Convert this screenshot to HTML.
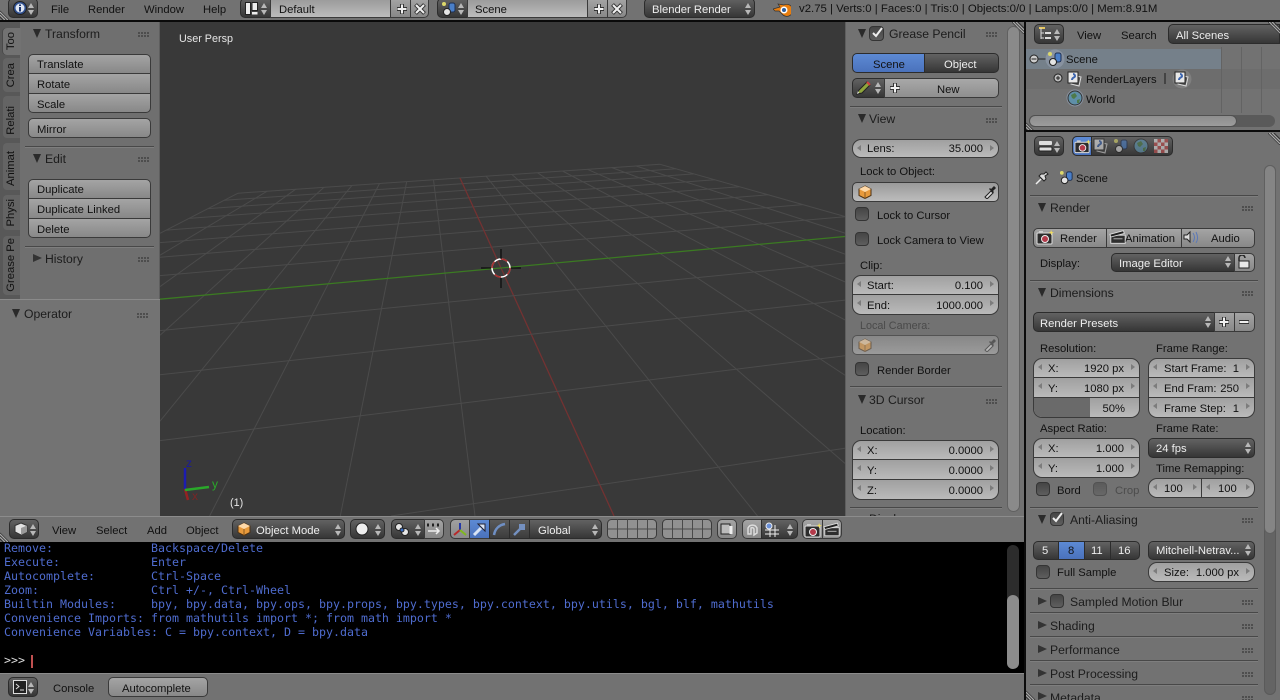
<!DOCTYPE html>
<html><head><meta charset="utf-8"><title>Blender</title>
<style>
html,body{margin:0;padding:0;background:#000;width:1280px;height:700px;overflow:hidden}
#r{position:relative;width:1280px;height:700px;overflow:hidden;font:11.25px/14px "Liberation Sans",sans-serif;color:#111;background:#000}
#r div,#r span,#r i,#r svg{position:absolute;box-sizing:border-box}
.p{background:#727272}
.t{white-space:nowrap;line-height:18px}
.w{color:#eee}
.t.tt{font-size:12.2px;color:#1c1c1c;line-height:14px}
.b,.f,.n,.d{border:1px solid #3a3a3a;white-space:nowrap;line-height:17px}
.b{background:linear-gradient(#a4a4a4,#888);border-radius:5px;color:#111}
.f{background:linear-gradient(#9a9a9a,#bcbcbc);border-radius:5px}
.n{background:linear-gradient(#a0a0a0,#bababa);border-radius:9px}
.d{background:linear-gradient(#626262,#363636);border-radius:5px;color:#eee;border-color:#2c2c2c}
.n::before,.n::after{content:"";position:absolute;top:5px;border:3.5px solid transparent}
.n::before{left:4px;border-right:4px solid #7c7c7c;border-left:0}
.n::after{right:4px;border-left:4px solid #7c7c7c;border-right:0}
.nn::before,.nn::after{display:none}
.l{left:14px}.v{right:15px}
.ud{width:7px;height:12px}
.ud::before,.ud::after{content:"";position:absolute;left:0;border-left:3.5px solid transparent;border-right:3.5px solid transparent}
.ud::before{top:0;border-bottom:5px solid #b8b8b8}
.ud::after{bottom:0;border-top:5px solid #b8b8b8}
.to{border-left:4.5px solid transparent;border-right:4.5px solid transparent;border-top:9px solid #2a2a2a;width:0;height:0}
.tc{border-top:4.5px solid transparent;border-bottom:4.5px solid transparent;border-left:9px solid #333;width:0;height:0}
.g{width:11px;height:6px;background:radial-gradient(circle at 1px 1px,#3c3c3c .7px,transparent 1.1px) 0 0/3px 3px}
.h{height:1px;background:#484848;box-shadow:0 1px 0 #7e7e7e}
.c{width:14px;height:14px;border:1px solid #343434;border-radius:4px;background:linear-gradient(#454545,#5e5e5e)}
.m{font:11.63px/14px "DejaVu Sans Mono",monospace;color:#4f6ccf;white-space:pre;left:4px}
.tab{background:#646464;border-radius:4px 0 0 4px;width:17px;left:3px}
.tab span{writing-mode:vertical-rl;transform:rotate(180deg);white-space:nowrap;left:2px;bottom:3px;line-height:13px}
</style></head><body>
<svg width="0" height="0" style="position:absolute">
<defs>
<symbol id="cube" viewBox="0 0 14 14"><path d="M7 1 13 4v6.500L7 13.500 1 10.500V4Z" fill="#e89a3c" stroke="#4a3015"/><path d="M1 4 7 7 13 4 7 1Z" fill="#ffd9a8"/><path d="M7 7v6.500" stroke="#8a5a20"/></symbol>
<symbol id="scn" viewBox="0 0 16 16"><circle cx="3" cy="3" r="2" fill="#dcd86a"/><rect x="8" y="2" width="6" height="9" rx="2" fill="#4a7fc8" stroke="#1d2f52"/><circle cx="6" cy="11" r="3.500" fill="#e4e4e4" stroke="#222"/></symbol>
<symbol id="cam" viewBox="0 0 18 16"><rect x="1" y="4" width="15" height="11" rx="1" fill="#2c2c2c" stroke="#ddd"/><circle cx="9" cy="10" r="3.500" fill="#b33a4a" stroke="#eee"/><path d="M3 2h4v2H3z" fill="#ccc"/><path d="M15 1l1 2 2 .5-2 .8-.7 2-.8-2-2-.8 2-.5Z" fill="#f0dc60"/></symbol>
<symbol id="clap" viewBox="0 0 20 16"><rect x="2" y="6" width="16" height="9" fill="#2e2e2e" stroke="#ddd"/><path d="M1 5 16 1l1 3L2 8Z" fill="#222" stroke="#ddd"/><path d="M5 10h10" stroke="#bbb"/></symbol>
<symbol id="rl" viewBox="0 0 16 16"><path d="M5 4l9 2-2 9-8-2Z" fill="#555" stroke="#ddd"/><rect x="1" y="1" width="10" height="11" fill="#e8e8e8" stroke="#222"/><path d="M6 3a2 2 0 0 1 2 2c0 2-3 1-3 4" stroke="#3d66b0" stroke-width="2" fill="none"/></symbol>
<symbol id="world" viewBox="0 0 16 16"><circle cx="8" cy="8" r="7" fill="#5f8fa8" stroke="#333"/><path d="M4 5l4-2 2 3-3 3-2-1ZM10 10l3-1-1 4-2 0Z" fill="#4e7a4a"/></symbol>
<symbol id="plus" viewBox="0 0 14 14"><path d="M7 2v10M2 7h10" stroke="#333" stroke-width="4"/><path d="M7 2.500v9M2.500 7h9" stroke="#f0f0f0" stroke-width="2"/></symbol>
<symbol id="x" viewBox="0 0 14 14"><path d="M2.500 2.500l9 9M11.500 2.500l-9 9" stroke="#333" stroke-width="4"/><path d="M3 3l8 8M11 3l-8 8" stroke="#f0f0f0" stroke-width="2"/></symbol>
<symbol id="drop" viewBox="0 0 14 14"><path d="M2 12 8 6l2 2-6 6Z" fill="#ddd" stroke="#222"/><path d="M8 4l3-3 2 2-3 3 1 1-1 1-4-4 1-1Z" fill="#222"/></symbol>
<symbol id="chk" viewBox="0 0 14 14"><path d="M3 7l3 3 6-8" stroke="#eee" stroke-width="2" fill="none"/></symbol>
</defs></svg>
<div id="r">

<!-- top bar -->
<div class="p" style="left:0;top:0;width:1280px;height:20px"></div>
<svg style="left:0;top:8px" width="12" height="12"><path d="M0 3l9 9M0 6l6 6M0 9l3 3" stroke="#333"/><path d="M0 4l8 8M0 7l5 5" stroke="#aaa"/></svg>
<div class="d" style="left:8px;top:-2px;width:30px;height:20px"></div>
<svg style="left:13px;top:1px" width="14" height="14"><circle cx="7" cy="7" r="6.500" fill="#2f4f8f" stroke="#222"/><circle cx="7" cy="7" r="4.500" fill="#dfe6f2"/><path d="M7 3.500v1.500M7 6v4.500" stroke="#1d3670" stroke-width="2"/></svg>
<i class="ud" style="left:28px;top:3px"></i>
<div class="t" style="left:51px;top:1px">File</div>
<div class="t" style="left:88px;top:1px">Render</div>
<div class="t" style="left:144px;top:1px">Window</div>
<div class="t" style="left:203px;top:1px">Help</div>
<div class="d" style="left:240px;top:-2px;width:32px;height:20px;border-radius:5px 0 0 5px"></div>
<svg style="left:245px;top:2px" width="13" height="13"><rect x=".5" y=".5" width="5" height="12" fill="#eee" stroke="#222"/><rect x="7" y=".5" width="5.500" height="8" fill="#eee" stroke="#222"/><rect x="7" y="10" width="5.500" height="2.500" fill="#eee"/></svg>
<i class="ud" style="left:261px;top:3px"></i>
<div class="f" style="left:270px;top:-2px;width:121px;height:20px;border-radius:0"><span class="t" style="left:8px;top:2px">Default</span></div>
<div class="b" style="left:390px;top:-2px;width:21px;height:20px;border-radius:0"></div>
<svg style="left:395px;top:2px" width="14" height="14"><use href="#plus"/></svg>
<div class="b" style="left:410px;top:-2px;width:19px;height:20px;border-radius:0 0 5px 0"></div>
<svg style="left:413px;top:2px" width="14" height="14"><use href="#x"/></svg>
<div class="d" style="left:437px;top:-2px;width:31px;height:20px;border-radius:5px 0 0 5px"></div>
<svg style="left:441px;top:1px" width="16" height="16"><use href="#scn"/></svg>
<i class="ud" style="left:458px;top:3px"></i>
<div class="f" style="left:467px;top:-2px;width:121px;height:20px;border-radius:0"><span class="t" style="left:7px;top:2px">Scene</span></div>
<div class="b" style="left:587px;top:-2px;width:21px;height:20px;border-radius:0"></div>
<svg style="left:592px;top:2px" width="14" height="14"><use href="#plus"/></svg>
<div class="b" style="left:607px;top:-2px;width:20px;height:20px;border-radius:0 0 5px 0"></div>
<svg style="left:610px;top:2px" width="14" height="14"><use href="#x"/></svg>
<div class="d" style="left:644px;top:-2px;width:111px;height:20px"><span class="t w" style="left:7px;top:2px">Blender Render</span></div>
<i class="ud" style="left:745px;top:3px"></i>
<svg style="left:773px;top:1px" width="18" height="16"><path d="M0 8 7 6 5 3l6 1a6 6 0 1 1-2 9L6 10 2 10Z" fill="#e87d0d" stroke="#333" stroke-width=".7"/><circle cx="11" cy="9" r="3.500" fill="#fff"/><circle cx="11" cy="9" r="2" fill="#2f5f9f"/></svg>
<div class="t" style="left:799px;top:0px;font-size:11.4px">v2.75 | Verts:0 | Faces:0 | Tris:0 | Objects:0/0 | Lamps:0/0 | Mem:8.91M</div>
<div style="left:0;top:20px;width:1280px;height:2px;background:#0a0a0a"></div>

<!-- viewport -->
<div style="left:160px;top:22px;width:685px;height:494px;background:#393939"></div>
<svg id="grid" style="left:160px;top:22px" width="685" height="494" viewBox="160 22 685 494"></svg>
<svg style="left:160px;top:22px" width="685" height="494" viewBox="160 22 685 494">
<circle cx="501" cy="268" r="9" fill="none" stroke="#fff" stroke-width="1.500"/>
<circle cx="501" cy="268" r="9" fill="none" stroke="#a82c2c" stroke-width="1.500" stroke-dasharray="7 7"/>
<path d="M501 249v10M501 278v10M481 268h10M511 268h10" stroke="#000" stroke-width="1"/>
<path d="M185 489v-21" stroke="#1c1cb0" stroke-width="2.500"/>
<path d="M185 489 188 500" stroke="#962222" stroke-width="2.500"/>
<path d="M185 490 209 487" stroke="#2aa82a" stroke-width="2.500"/>
</svg>
<div class="t" style="left:186px;top:454px;color:#1a1a9a;font-size:12px">z</div>
<div class="t" style="left:212px;top:475px;color:#2aa82a;font-size:12px">y</div>
<div class="t" style="left:192px;top:487px;color:#7a2626;font-size:12px">x</div>
<div class="t" style="left:179px;top:30px;color:#e6e6e6;font-size:10.8px">User Persp</div>
<div class="t" style="left:230px;top:494px;color:#e6e6e6;font-size:10.8px">(1)</div>

<!-- tool shelf -->
<div style="left:0;top:22px;width:160px;height:278px;background:#6f6f6f"></div>
<div style="left:0;top:22px;width:20px;height:278px;background:#585858"></div>
<div style="left:159px;top:22px;width:1px;height:278px;background:#5e5e5e"></div>
<div class="tab" style="top:28px;height:27px;background:#727272;width:18px;box-shadow:-1px 0 0 #4a4a4a"><span style="bottom:5px">Too</span></div>
<div class="tab" style="top:58px;height:34px"><span style="bottom:5px">Crea</span></div>
<div class="tab" style="top:96px;height:42px"><span>Relati</span></div>
<div class="tab" style="top:143px;height:47px"><span style="bottom:4px">Animat</span></div>
<div class="tab" style="top:195px;height:35px"><span>Physi</span></div>
<div class="tab" style="top:236px;height:59px"><span>Grease Pe</span></div>

<i class="to" style="left:33px;top:29px"></i>
<div class="t tt" style="left:45px;top:27px">Transform</div><i class="g" style="left:138px;top:32px"></i>
<div class="b" style="left:28px;top:54px;width:123px;height:20px;border-radius:5px 5px 0 0"><span class="t" style="left:8px;top:1px">Translate</span></div>
<div class="b" style="left:28px;top:73px;width:123px;height:21px;border-radius:0"><span class="t" style="left:8px;top:2px">Rotate</span></div>
<div class="b" style="left:28px;top:93px;width:123px;height:20px;border-radius:0 0 5px 5px"><span class="t" style="left:8px;top:2px">Scale</span></div>
<div class="b" style="left:28px;top:118px;width:123px;height:20px"><span class="t" style="left:8px;top:2px">Mirror</span></div>
<div class="h" style="left:25px;top:146px;width:129px"></div>
<i class="to" style="left:33px;top:154px"></i>
<div class="t tt" style="left:45px;top:152px">Edit</div><i class="g" style="left:138px;top:157px"></i>
<div class="b" style="left:28px;top:179px;width:123px;height:20px;border-radius:5px 5px 0 0"><span class="t" style="left:8px;top:1px">Duplicate</span></div>
<div class="b" style="left:28px;top:198px;width:123px;height:21px;border-radius:0"><span class="t" style="left:8px;top:2px">Duplicate Linked</span></div>
<div class="b" style="left:28px;top:218px;width:123px;height:20px;border-radius:0 0 5px 5px"><span class="t" style="left:8px;top:2px">Delete</span></div>
<div class="h" style="left:25px;top:246px;width:129px"></div>
<i class="tc" style="left:33px;top:254px"></i>
<div class="t tt" style="left:45px;top:252px">History</div><i class="g" style="left:138px;top:257px"></i>

<!-- operator -->
<div style="left:0;top:299px;width:160px;height:217px;background:#737373;border-top:1px solid #8a8a8a"></div>
<i class="to" style="left:12px;top:309px"></i>
<div class="t tt" style="left:24px;top:307px">Operator</div><i class="g" style="left:137px;top:313px"></i>

<!-- N panel -->
<div style="left:845px;top:22px;width:180px;height:494px;background:#727272;border-left:1px solid #5e5e5e"></div>
<svg style="left:1012px;top:22px" width="13" height="12"><path d="M0 0l12 12M3 0l9 9M6 0l6 6" stroke="#333"/><path d="M1 0l11 11M4 0l8 8" stroke="#aaa"/></svg>
<div style="left:1007px;top:26px;width:13px;height:486px;border-radius:7px;background:#8a8a8a;border:1px solid #606060"></div>

<i class="to" style="left:858px;top:29px"></i>
<div class="c" style="left:869px;top:26px;width:15px;height:15px"></div><svg style="left:870px;top:26px" width="14" height="14"><use href="#chk"/></svg>
<div class="t tt" style="left:889px;top:27px">Grease Pencil</div><i class="g" style="left:986px;top:32px"></i>
<div class="d" style="left:852px;top:53px;width:73px;height:20px;background:linear-gradient(#5d8ad4,#4a72bc);border-radius:5px 0 0 5px;color:#111"><span class="t" style="left:20px;top:2px">Scene</span></div>
<div class="d" style="left:924px;top:53px;width:75px;height:20px;border-radius:0 5px 5px 0"><span class="t" style="left:19px;top:2px">Object</span></div>
<div class="d" style="left:852px;top:78px;width:33px;height:20px;border-radius:5px 0 0 5px"></div>
<svg style="left:856px;top:81px" width="15" height="14"><path d="M1 13 3 9 11 1l3 3-8 8Z" fill="#8fa53c" stroke="#222"/><path d="M11 1l3 3" stroke="#d04040" stroke-width="2"/><path d="M1 13l2-1-1-2Z" fill="#eee"/></svg>
<i class="ud" style="left:875px;top:82px"></i>
<div class="f" style="left:884px;top:78px;width:115px;height:20px;border-radius:0 5px 5px 0;background:linear-gradient(#a8a8a8,#8f8f8f)"><span class="t" style="left:52px;top:2px">New</span></div>
<svg style="left:888px;top:81px" width="14" height="14"><use href="#plus"/></svg>
<div class="h" style="left:850px;top:106px;width:152px"></div>

<i class="to" style="left:858px;top:114px"></i>
<div class="t tt" style="left:869px;top:112px">View</div><i class="g" style="left:986px;top:118px"></i>
<div class="n" style="left:852px;top:139px;width:147px;height:19px"><span class="t l" style="top:0">Lens:</span><span class="t v" style="top:0">35.000</span></div>
<div class="t" style="left:860px;top:163px">Lock to Object:</div>
<div class="f" style="left:852px;top:182px;width:147px;height:20px"></div>
<svg style="left:858px;top:185px" width="14" height="14"><use href="#cube"/></svg>
<svg style="left:983px;top:185px" width="14" height="14"><use href="#drop"/></svg>
<div class="c" style="left:855px;top:207px"></div><div class="t" style="left:877px;top:207px">Lock to Cursor</div>
<div class="c" style="left:855px;top:232px"></div><div class="t" style="left:877px;top:232px">Lock Camera to View</div>
<div class="t" style="left:860px;top:257px">Clip:</div>
<div class="n" style="left:852px;top:275px;width:147px;height:20px;border-radius:9px 9px 0 0"><span class="t l" style="top:1px">Start:</span><span class="t v" style="top:1px">0.100</span></div>
<div class="n" style="left:852px;top:295px;width:147px;height:20px;border-radius:0 0 9px 9px;border-top:0"><span class="t l" style="top:2px">End:</span><span class="t v" style="top:2px">1000.000</span></div>
<div class="t" style="left:860px;top:317px;color:#4a4a4a;font-size:10.8px">Local Camera:</div>
<div class="f" style="left:852px;top:335px;width:147px;height:20px;opacity:.55"></div>
<svg style="left:858px;top:338px;opacity:.55" width="14" height="14"><use href="#cube"/></svg>
<svg style="left:983px;top:338px;opacity:.5" width="14" height="14"><use href="#drop"/></svg>
<div class="c" style="left:855px;top:362px"></div><div class="t" style="left:877px;top:362px">Render Border</div>
<div class="h" style="left:850px;top:386px;width:152px"></div>
<i class="to" style="left:858px;top:395px"></i>
<div class="t tt" style="left:869px;top:393px">3D Cursor</div><i class="g" style="left:986px;top:399px"></i>
<div class="t" style="left:860px;top:422px">Location:</div>
<div class="n" style="left:852px;top:440px;width:147px;height:20px;border-radius:9px 9px 0 0"><span class="t l" style="top:1px">X:</span><span class="t v" style="top:1px">0.0000</span></div>
<div class="n" style="left:852px;top:460px;width:147px;height:20px;border-radius:0;border-top:0"><span class="t l" style="top:2px">Y:</span><span class="t v" style="top:2px">0.0000</span></div>
<div class="n" style="left:852px;top:480px;width:147px;height:20px;border-radius:0 0 9px 9px;border-top:0"><span class="t l" style="top:2px">Z:</span><span class="t v" style="top:2px">0.0000</span></div>
<div class="h" style="left:850px;top:507px;width:152px"></div>
<div class="t tt" style="left:869px;top:512px">Display</div>

<!-- 3D view header -->
<div style="left:0;top:516px;width:1025px;height:26px;background:#727272;border-top:1px solid #8c8c8c"></div>
<svg style="left:0;top:530px" width="12" height="12"><path d="M0 3l9 9M0 6l6 6M0 9l3 3" stroke="#333"/><path d="M0 4l8 8M0 7l5 5" stroke="#aaa"/></svg>
<div class="d" style="left:9px;top:519px;width:30px;height:20px"></div>
<svg style="left:14px;top:522px" width="14" height="14"><path d="M7 1 13 3.500V10L7 13 1 10V3.500Z" fill="#e2e2e2" stroke="#333"/><path d="M7 6v7L13 10V3.500Z" fill="#999"/></svg>
<i class="ud" style="left:30px;top:524px"></i>
<div class="t" style="left:52px;top:522px">View</div>
<div class="t" style="left:96px;top:522px">Select</div>
<div class="t" style="left:147px;top:522px">Add</div>
<div class="t" style="left:186px;top:522px">Object</div>
<div class="d" style="left:232px;top:519px;width:113px;height:20px"><span class="t" style="left:23px;top:2px">Object Mode</span></div>
<svg style="left:237px;top:522px" width="14" height="14"><use href="#cube"/></svg>
<i class="ud" style="left:335px;top:524px"></i>
<div class="d" style="left:350px;top:519px;width:35px;height:20px"></div>
<svg style="left:355px;top:522px" width="14" height="14"><circle cx="7" cy="7" r="6" fill="#eee" stroke="#222"/></svg>
<i class="ud" style="left:375px;top:524px"></i>
<div class="d" style="left:391px;top:519px;width:34px;height:20px;border-radius:5px 0 0 5px"></div>
<svg style="left:394px;top:522px" width="16" height="15"><circle cx="5" cy="5" r="3.500" fill="#e6e6e6" stroke="#222"/><circle cx="11" cy="10" r="3.500" fill="#e6e6e6" stroke="#222"/><circle cx="8" cy="8" r="2" fill="#3a6cc0" stroke="#222"/></svg>
<i class="ud" style="left:415px;top:524px"></i>
<div class="b" style="left:424px;top:519px;width:20px;height:20px;border-radius:0 5px 5px 0"></div>
<svg style="left:426px;top:522px" width="16" height="14"><path d="M1 3l2 0M6 3h2M11 3h2" stroke="#222" stroke-width="3"/><path d="M2 9h11M10 6l3 3-3 3" stroke="#eee" stroke-width="1.500" fill="none"/></svg>
<div class="d" style="left:450px;top:519px;width:81px;height:20px;border-radius:5px 0 0 5px;background:linear-gradient(#5a5a5a,#3c3c3c)"></div>
<div class="b" style="left:450px;top:519px;width:20px;height:20px;border-radius:5px 0 0 5px;background:linear-gradient(#a0a0a0,#8a8a8a)"></div>
<svg style="left:452px;top:522px" width="16" height="15"><path d="M8 1v7" stroke="#2438a8" stroke-width="2"/><path d="M8 8 2 13" stroke="#b82a2a" stroke-width="2"/><path d="M8 8l6 5" stroke="#7fb81e" stroke-width="2"/></svg>
<div class="b" style="left:469px;top:519px;width:21px;height:20px;border-radius:0;background:linear-gradient(#5d8ad4,#4a72bc)"></div>
<svg style="left:472px;top:522px" width="15" height="15"><path d="M2 13 9 6" stroke="#d8e4f6" stroke-width="3"/><path d="M6 2h7v7Z" fill="#d8e4f6" stroke="#223"/></svg>
<svg style="left:492px;top:522px" width="15" height="15"><path d="M2 13C3 7 7 3 13 2" stroke="#6f8fc4" stroke-width="2.500" fill="none"/></svg>
<svg style="left:512px;top:522px" width="15" height="15"><path d="M2 13 8 7" stroke="#7490c0" stroke-width="2.500"/><rect x="7" y="2" width="6" height="6" fill="#7490c0"/></svg>
<div style="left:489px;top:519px;width:1px;height:20px;background:#2c2c2c"></div>
<div style="left:509px;top:519px;width:1px;height:20px;background:#2c2c2c"></div>
<div class="d" style="left:529px;top:519px;width:73px;height:20px;border-radius:0 5px 5px 0"><span class="t" style="left:8px;top:2px">Global</span></div>
<i class="ud" style="left:592px;top:524px"></i>
<svg style="left:607px;top:519px" width="50" height="20"><rect x=".5" y=".5" width="49" height="19" rx="4" fill="#919191" stroke="#3a3a3a"/><path d="M.5 10h49M10.500 .5v19M20.500 .5v19M30.500 .5v19M40.500 .5v19" stroke="#4a4a4a"/></svg>
<svg style="left:662px;top:519px" width="50" height="20"><rect x=".5" y=".5" width="49" height="19" rx="4" fill="#919191" stroke="#3a3a3a"/><path d="M.5 10h49M10.500 .5v19M20.500 .5v19M30.500 .5v19M40.500 .5v19" stroke="#4a4a4a"/></svg>
<div class="b" style="left:717px;top:519px;width:20px;height:20px"></div>
<svg style="left:720px;top:522px" width="15" height="15"><rect x="1" y="2" width="9" height="10" fill="#bbb" stroke="#222"/><path d="M11 4v8" stroke="#eee" stroke-width="3"/></svg>
<div class="b" style="left:742px;top:519px;width:20px;height:20px;border-radius:5px 0 0 5px"></div>
<svg style="left:745px;top:522px" width="15" height="15"><path d="M3 6a5 5 0 0 1 9 0L12 11 9 13 9 7a2 2 0 0 0-3-1L6 12 3 12Z" fill="none" stroke="#dcdcdc" stroke-width="1.500"/></svg>
<div class="d" style="left:761px;top:519px;width:37px;height:20px;border-radius:0 5px 5px 0"></div>
<svg style="left:764px;top:522px" width="16" height="15"><path d="M1 8h14M1 12h14M6 3v12M11 3v12" stroke="#eee"/><circle cx="5" cy="4" r="3" fill="#6a90d8" stroke="#eee"/></svg>
<i class="ud" style="left:787px;top:524px"></i>
<div class="b" style="left:802px;top:519px;width:21px;height:20px;border-radius:5px 0 0 5px"></div>
<svg style="left:804px;top:522px" width="18" height="16"><use href="#cam"/></svg>
<div class="b" style="left:822px;top:519px;width:20px;height:20px;border-radius:0 5px 5px 0"></div>
<svg style="left:823px;top:522px" width="18" height="15"><use href="#clap"/></svg>

<!-- console -->
<div style="left:0;top:542px;width:1025px;height:131px;background:#000"></div>
<div class="m" style="top:541px">Remove:              Backspace/Delete</div>
<div class="m" style="top:555px">Execute:             Enter</div>
<div class="m" style="top:569px">Autocomplete:        Ctrl-Space</div>
<div class="m" style="top:583px">Zoom:                Ctrl +/-, Ctrl-Wheel</div>
<div class="m" style="top:597px">Builtin Modules:     bpy, bpy.data, bpy.ops, bpy.props, bpy.types, bpy.context, bpy.utils, bgl, blf, mathutils</div>
<div class="m" style="top:611px">Convenience Imports: from mathutils import *; from math import *</div>
<div class="m" style="top:625px">Convenience Variables: C = bpy.context, D = bpy.data</div>
<div class="m" style="top:653px;color:#ddd">&gt;&gt;&gt;</div>
<div style="left:31px;top:655px;width:2px;height:13px;background:#c05050"></div>
<div style="left:1007px;top:545px;width:12px;height:124px;border-radius:6px;background:#2c2c2c"></div>
<div style="left:1007px;top:595px;width:12px;height:74px;border-radius:6px;background:#8c8c8c"></div>

<!-- console header -->
<div style="left:0;top:673px;width:1025px;height:27px;background:#727272;border-top:1px solid #8c8c8c"></div>
<div class="d" style="left:8px;top:677px;width:30px;height:20px"></div>
<svg style="left:13px;top:680px" width="14" height="14"><rect x=".5" y=".5" width="13" height="13" fill="#222" stroke="#ddd"/><path d="M3 4l3 2.500L3 9M7 10h4" stroke="#ddd" fill="none"/></svg>
<i class="ud" style="left:28px;top:682px"></i>
<div class="t" style="left:53px;top:680px">Console</div>
<div class="b" style="left:108px;top:677px;width:100px;height:20px"><span class="t" style="left:13px;top:2px">Autocomplete</span></div>

<!-- vertical split -->
<div style="left:1024px;top:22px;width:2px;height:678px;background:#0c0c0c"></div>

<!-- outliner -->
<div style="left:1026px;top:22px;width:254px;height:108px;background:#727272"></div>
<div style="left:1026px;top:69px;width:254px;height:20px;background:#6d6d6d"></div>
<div style="left:1026px;top:49px;width:195px;height:20px;background:#75808a"></div>
<div style="left:1221px;top:47px;width:1px;height:66px;background:#636363"></div>
<div style="left:1241px;top:47px;width:1px;height:66px;background:#636363"></div>
<div style="left:1261px;top:47px;width:1px;height:66px;background:#636363"></div>
<div class="d" style="left:1034px;top:24px;width:30px;height:20px"></div>
<svg style="left:1038px;top:27px" width="15" height="14"><path d="M1 1h6" stroke="#e8c860" stroke-width="2"/><path d="M3 1v11M3 6h3M3 11h3" stroke="#ddd"/><path d="M7 6h6M7 11h6" stroke="#ddd" stroke-width="2"/></svg>
<i class="ud" style="left:1054px;top:29px"></i>
<div class="t" style="left:1077px;top:27px">View</div>
<div class="t" style="left:1121px;top:27px">Search</div>
<div class="d" style="left:1168px;top:24px;width:112px;height:20px;border-radius:5px 0 0 5px"><span class="t" style="left:7px;top:2px">All Scenes</span></div>
<svg style="left:1268px;top:22px" width="12" height="12"><path d="M0 0l12 12M3 0l9 9M6 0l6 6" stroke="#333"/><path d="M1 0l11 11M4 0l8 8" stroke="#aaa"/></svg>
<svg style="left:1028px;top:53px" width="26" height="12"><circle cx="6" cy="6" r="4" fill="#ccc" stroke="#222"/><path d="M3.500 6h5M10 6h12" stroke="#222"/></svg>
<svg style="left:1045px;top:49px" width="20" height="20"><circle cx="10" cy="10" r="9.500" fill="#8892a0"/><svg x="2" y="2" width="16" height="16"><use href="#scn"/></svg></svg>
<div class="t" style="left:1066px;top:51px">Scene</div>
<svg style="left:1053px;top:73px" width="10" height="10"><circle cx="5" cy="5" r="4" fill="#bbb" stroke="#222"/><path d="M3 5h4M5 3v4" stroke="#222"/></svg>
<svg style="left:1067px;top:71px" width="16" height="16"><use href="#rl"/></svg>
<div class="t" style="left:1086px;top:71px">RenderLayers</div>
<div style="left:1164px;top:73px;width:2px;height:11px;background:#444"></div>
<svg style="left:1172px;top:69px" width="20" height="20"><circle cx="10" cy="10" r="9.500" fill="#7f7f7f"/><svg x="2" y="2" width="16" height="16"><use href="#rl"/></svg></svg>
<svg style="left:1066px;top:89px" width="18" height="18"><circle cx="9" cy="9" r="8.500" fill="#8892a0"/><svg x="1" y="1" width="16" height="16"><use href="#world"/></svg></svg>
<div class="t" style="left:1086px;top:91px">World</div>
<div style="left:1029px;top:115px;width:246px;height:12px;border-radius:6px;background:#5a5a5a"></div>
<div style="left:1029px;top:115px;width:208px;height:12px;border-radius:6px;background:linear-gradient(#8e8e8e,#9c9c9c);border:1px solid #505050"></div>
<svg style="left:1026px;top:120px" width="12" height="12"><path d="M0 3l9 9M0 6l6 6M0 9l3 3" stroke="#333"/><path d="M0 4l8 8M0 7l5 5" stroke="#aaa"/></svg>
<div style="left:1026px;top:130px;width:254px;height:2px;background:#0c0c0c"></div>

<!-- properties -->
<div style="left:1026px;top:132px;width:254px;height:568px;background:#727272"></div>
<svg style="left:1268px;top:133px" width="12" height="12"><path d="M0 0l12 12M3 0l9 9M6 0l6 6" stroke="#333"/><path d="M1 0l11 11M4 0l8 8" stroke="#aaa"/></svg>
<div class="d" style="left:1034px;top:136px;width:30px;height:20px"></div>
<svg style="left:1038px;top:139px" width="15" height="14"><rect x="1" y="2" width="13" height="4" rx="1" fill="#ddd"/><rect x="1" y="8" width="13" height="4" rx="1" fill="#ddd" stroke="#222"/></svg>
<i class="ud" style="left:1054px;top:141px"></i>
<div class="d" style="left:1072px;top:136px;width:101px;height:20px"></div>
<div class="d" style="left:1072px;top:136px;width:20px;height:20px;background:linear-gradient(#5d8ad4,#4a72bc);border-radius:5px 0 0 5px"></div>
<svg style="left:1074px;top:138px" width="17" height="16"><use href="#cam"/></svg>
<svg style="left:1093px;top:138px;opacity:.6" width="16" height="16"><use href="#rl"/></svg>
<svg style="left:1113px;top:138px;opacity:.6" width="16" height="16"><use href="#scn"/></svg>
<svg style="left:1133px;top:138px;opacity:.7" width="16" height="16"><use href="#world"/></svg>
<svg style="left:1154px;top:139px;opacity:.75" width="14" height="14"><rect width="14" height="14" fill="#b05050"/><path d="M0 0h3.500v3.500H0zM7 0h3.500v3.500H7zM3.500 3.500H7V7H3.500zM10.500 3.500H14V7h-3.500zM0 7h3.500v3.500H0zM7 7h3.500v3.500H7zM3.500 10.500H7V14H3.500zM10.500 10.500H14V14h-3.500z" fill="#ccc"/></svg>
<div style="left:1264px;top:165px;width:12px;height:530px;border-radius:6px;background:#646464;border:1px solid #5a5a5a"></div>
<div style="left:1264px;top:165px;width:12px;height:369px;border-radius:6px;background:#858585;border:1px solid #606060"></div>
<svg style="left:1035px;top:170px" width="16" height="15"><path d="M1 14 6 9" stroke="#eee" stroke-width="1.500"/><path d="M4 6 9 11 11 9 10 6 13 4 11 2 9 4 6 4Z" fill="#ddd" stroke="#222"/></svg>
<svg style="left:1059px;top:170px" width="15" height="15"><use href="#scn"/></svg>
<div class="t" style="left:1076px;top:170px">Scene</div>
<div class="h" style="left:1030px;top:195px;width:228px"></div>

<i class="to" style="left:1038px;top:203px"></i>
<div class="t tt" style="left:1050px;top:201px">Render</div><i class="g" style="left:1242px;top:206px"></i>
<div class="b" style="left:1033px;top:228px;width:74px;height:20px;border-radius:5px 0 0 5px"><span class="t" style="left:26px;top:1px">Render</span></div>
<div class="b" style="left:1106px;top:228px;width:76px;height:20px;border-radius:0"><span class="t" style="left:18px;top:1px">Animation</span></div>
<div class="b" style="left:1181px;top:228px;width:74px;height:20px;border-radius:0 5px 5px 0"><span class="t" style="left:29px;top:1px">Audio</span></div>
<svg style="left:1036px;top:229px" width="18" height="16"><use href="#cam"/></svg>
<svg style="left:1109px;top:229px" width="18" height="16"><use href="#clap"/></svg>
<svg style="left:1183px;top:230px" width="16" height="15"><path d="M1 5h3l3-3v10L4 9H1Z" fill="#ddd" stroke="#222"/><path d="M10 3c2 3 2 6 0 9M13 2c2 4 2 8 0 11" stroke="#5a78b8" fill="none"/></svg>
<div class="t" style="left:1040px;top:255px">Display:</div>
<div class="d" style="left:1111px;top:253px;width:124px;height:19px;border-radius:5px 0 0 5px"><span class="t" style="left:7px;top:1px">Image Editor</span></div>
<i class="ud" style="left:1225px;top:256px"></i>
<div class="b" style="left:1234px;top:253px;width:21px;height:19px;border-radius:0 5px 5px 0"></div>
<svg style="left:1236px;top:255px" width="15" height="15"><path d="M3 6V3a3 3 0 0 1 6 0" stroke="#222" stroke-width="1.500" fill="none"/><rect x="3" y="6" width="10" height="7" fill="#e8e8e8" stroke="#222"/></svg>
<div class="h" style="left:1030px;top:280px;width:228px"></div>

<i class="to" style="left:1038px;top:288px"></i>
<div class="t tt" style="left:1050px;top:286px">Dimensions</div><i class="g" style="left:1242px;top:291px"></i>
<div class="d" style="left:1033px;top:312px;width:182px;height:20px;border-radius:5px 0 0 5px"><span class="t" style="left:6px;top:2px">Render Presets</span></div>
<i class="ud" style="left:1205px;top:316px"></i>
<div class="b" style="left:1214px;top:312px;width:21px;height:20px;border-radius:0"></div>
<svg style="left:1217px;top:315px" width="14" height="14"><use href="#plus"/></svg>
<div class="b" style="left:1234px;top:312px;width:21px;height:20px;border-radius:0 5px 5px 0"></div>
<svg style="left:1237px;top:315px" width="14" height="14"><path d="M2 7h10" stroke="#333" stroke-width="4"/><path d="M2.500 7h9" stroke="#f0f0f0" stroke-width="2"/></svg>

<div class="t" style="left:1040px;top:340px">Resolution:</div>
<div class="t" style="left:1156px;top:340px">Frame Range:</div>
<div class="n" style="left:1033px;top:358px;width:107px;height:20px;border-radius:9px 9px 0 0"><span class="t l" style="top:1px">X:</span><span class="t v" style="top:1px">1920 px</span></div>
<div class="n" style="left:1033px;top:378px;width:107px;height:20px;border-radius:0;border-top:0"><span class="t l" style="top:2px">Y:</span><span class="t v" style="top:2px">1080 px</span></div>
<div class="n nn" style="left:1033px;top:398px;width:107px;height:20px;border-radius:0 0 9px 9px;border-top:0;overflow:hidden"><div style="left:0;top:0;width:56px;height:19px;background:#6a6a6a"></div><span class="t" style="right:14px;top:2px">50%</span></div>
<div class="n" style="left:1148px;top:358px;width:107px;height:20px;border-radius:9px 9px 0 0"><span class="t l" style="left:15px;top:1px">Start Frame:</span><span class="t v" style="right:15px;top:1px">1</span></div>
<div class="n" style="left:1148px;top:378px;width:107px;height:20px;border-radius:0;border-top:0"><span class="t l" style="left:15px;top:2px">End Fram:</span><span class="t v" style="right:15px;top:2px">250</span></div>
<div class="n" style="left:1148px;top:398px;width:107px;height:20px;border-radius:0 0 9px 9px;border-top:0"><span class="t l" style="left:15px;top:2px">Frame Step:</span><span class="t v" style="right:15px;top:2px">1</span></div>

<div class="t" style="left:1040px;top:420px">Aspect Ratio:</div>
<div class="t" style="left:1156px;top:420px">Frame Rate:</div>
<div class="n" style="left:1033px;top:438px;width:107px;height:20px;border-radius:9px 9px 0 0"><span class="t l" style="top:1px">X:</span><span class="t v" style="top:1px">1.000</span></div>
<div class="n" style="left:1033px;top:458px;width:107px;height:20px;border-radius:0 0 9px 9px;border-top:0"><span class="t l" style="top:2px">Y:</span><span class="t v" style="top:2px">1.000</span></div>
<div class="d" style="left:1148px;top:438px;width:107px;height:20px"><span class="t" style="left:7px;top:1px">24 fps</span></div>
<i class="ud" style="left:1245px;top:442px"></i>
<div class="t" style="left:1156px;top:460px">Time Remapping:</div>
<div class="n" style="left:1148px;top:478px;width:54px;height:20px;border-radius:9px 0 0 9px"><span class="t" style="left:15px;top:1px">100</span></div>
<div class="n" style="left:1201px;top:478px;width:54px;height:20px;border-radius:0 9px 9px 0"><span class="t" style="left:16px;top:1px">100</span></div>
<div class="c" style="left:1036px;top:482px"></div><div class="t" style="left:1057px;top:482px">Bord</div>
<div class="c" style="left:1093px;top:482px;opacity:.5"></div><div class="t" style="left:1115px;top:482px;color:#4c4c4c">Crop</div>
<div class="h" style="left:1030px;top:507px;width:228px"></div>

<i class="to" style="left:1038px;top:515px"></i>
<div class="c" style="left:1050px;top:512px"></div><svg style="left:1050px;top:511px" width="14" height="14"><use href="#chk"/></svg>
<div class="t tt" style="left:1070px;top:513px">Anti-Aliasing</div><i class="g" style="left:1242px;top:518px"></i>
<div class="d" style="left:1033px;top:541px;width:26px;height:19px;border-radius:5px 0 0 5px"><span class="t" style="left:8px;top:0">5</span></div>
<div class="d" style="left:1058px;top:541px;width:27px;height:19px;border-radius:0;background:linear-gradient(#5d8ad4,#4a72bc);color:#111"><span class="t" style="left:9px;top:0">8</span></div>
<div class="d" style="left:1084px;top:541px;width:27px;height:19px;border-radius:0"><span class="t" style="left:6px;top:0">11</span></div>
<div class="d" style="left:1110px;top:541px;width:30px;height:19px;border-radius:0 5px 5px 0"><span class="t" style="left:7px;top:0">16</span></div>
<div class="d" style="left:1148px;top:541px;width:107px;height:19px"><span class="t" style="left:7px;top:0">Mitchell-Netrav...</span></div>
<i class="ud" style="left:1245px;top:544px"></i>
<div class="c" style="left:1036px;top:565px"></div><div class="t" style="left:1057px;top:564px">Full Sample</div>
<div class="n" style="left:1148px;top:562px;width:107px;height:20px"><span class="t" style="left:15px;top:1px">Size:</span><span class="t v" style="right:15px;top:1px">1.000 px</span></div>
<div class="h" style="left:1030px;top:588px;width:228px"></div>
<i class="tc" style="left:1038px;top:597px"></i>
<div class="c" style="left:1050px;top:594px"></div>
<div class="t tt" style="left:1070px;top:595px">Sampled Motion Blur</div><i class="g" style="left:1242px;top:600px"></i>
<div class="h" style="left:1030px;top:612px;width:228px"></div>
<i class="tc" style="left:1038px;top:621px"></i>
<div class="t tt" style="left:1050px;top:619px">Shading</div><i class="g" style="left:1242px;top:624px"></i>
<div class="h" style="left:1030px;top:636px;width:228px"></div>
<i class="tc" style="left:1038px;top:645px"></i>
<div class="t tt" style="left:1050px;top:643px">Performance</div><i class="g" style="left:1242px;top:648px"></i>
<div class="h" style="left:1030px;top:660px;width:228px"></div>
<i class="tc" style="left:1038px;top:669px"></i>
<div class="t tt" style="left:1050px;top:667px">Post Processing</div><i class="g" style="left:1242px;top:672px"></i>
<div class="h" style="left:1030px;top:684px;width:228px"></div>
<i class="tc" style="left:1038px;top:692px;border-top-width:4px;border-bottom-width:4px"></i>
<div class="t tt" style="left:1050px;top:691px;height:9px;overflow:hidden">Metadata</div>
<i class="g" style="left:1242px;top:696px;height:4px"></i>
<svg style="left:1026px;top:688px" width="12" height="12"><path d="M0 3l9 9M0 6l6 6M0 9l3 3" stroke="#333"/><path d="M0 4l8 8M0 7l5 5" stroke="#aaa"/></svg>
</div>
<script>
(function(){
function P(x,y){var w=1-.14*x+.0138*y;return [501+(10.87*x+55.2*y)/w,268+(23.85*x-5.05*y)/w];}
function L(a,b,c,w){
 var x0=160,x1=845,y0=22,y1=516,dx=b[0]-a[0],dy=b[1]-a[1],t0=0,t1=1,ps=[-dx,dx,-dy,dy],qs=[a[0]-x0,x1-a[0],a[1]-y0,y1-a[1]],k,r;
 for(k=0;k<4;k++){
  if(ps[k]==0){if(qs[k]<0)return '';continue;}
  r=qs[k]/ps[k];
  if(ps[k]<0){if(r>t0)t0=r;}else{if(r<t1)t1=r;}
 }
 if(t0>=t1)return '';
 return '<line x1="'+(a[0]+t0*dx).toFixed(1)+'" y1="'+(a[1]+t0*dy).toFixed(1)+'" x2="'+(a[0]+t1*dx).toFixed(1)+'" y2="'+(a[1]+t1*dy).toFixed(1)+'" stroke="'+c+'" stroke-width="'+(w||1)+'"/>';
}
var s='',i,xm;
for(i=-8;i<=8;i++){
 xm=Math.min(8,(1+.0138*i-.12)/.14);
 s+=L(P(-8,i),P(xm,i),i==0?'#733232':'#4b4b4b',i==0?1.3:1);
 if(i<=6&&i!=0)s+=L(P(i,-8),P(i,8),'#4b4b4b');
}
s+=L(P(0,-8),P(0,8),'#3b7a22',1.3);
document.getElementById('grid').innerHTML=s;
})();
</script>
</body></html>
